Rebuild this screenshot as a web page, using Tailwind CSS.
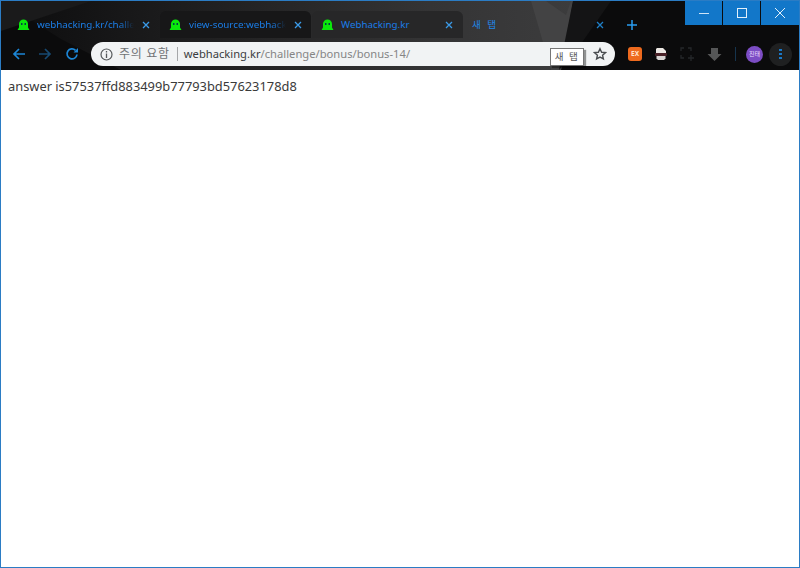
<!DOCTYPE html>
<html lang="en">
<head>
    <meta charset="UTF-8">
    <title>Webhacking.kr</title>
    <script src="https://cdn.jsdelivr.net/npm/@tailwindcss/browser@4"></script>
</head>
<body class="w-[800px] h-[568px] overflow-hidden bg-white font-['Noto_Sans','Noto_Sans_CJK_KR',sans-serif]">
<div class="w-full h-full border border-[#2b7cc4] flex flex-col">

    <!-- browser frame -->
    <div class="relative h-[69px] shrink-0 bg-[#0b0b0c] overflow-hidden">
        <!-- theme picture behind the tabs -->
        <svg class="absolute inset-0" width="798" height="69" viewBox="0 0 798 69">
            <defs>
                <linearGradient id="sheen" x1="0" y1="0" x2="1" y2="0">
                    <stop offset="0" stop-color="#0c0c0d"/>
                    <stop offset="0.3" stop-color="#1c1c1d"/>
                    <stop offset="0.75" stop-color="#343435"/>
                    <stop offset="1" stop-color="#3c3c3d"/>
                </linearGradient>
            </defs>
            <polygon points="0,0 572,0 560,69 120,69 60,38" fill="url(#sheen)"/>
            <polygon points="530,0 545,0 565,14 570,0 572,0 560,69 550,69" fill="#434344"/>
            <polygon points="572,0 610,0 575,50 558,69" fill="#141415"/>
            <polygon points="0,0 90,0 0,30" fill="#1a1a1b"/>
        </svg>

        <!-- window controls -->
        <div class="absolute top-0 right-0 flex gap-px z-10">
            <div class="w-[37px] h-[24px] bg-[#1277c9] flex items-center justify-center">
                <svg width="10" height="10"><path d="M0 5.500H10" stroke="#cfe4f6" fill="none"/></svg>
            </div>
            <div class="w-[37px] h-[24px] bg-[#1277c9] flex items-center justify-center">
                <svg width="10" height="10"><rect x="0.500" y="0.500" width="9" height="9" stroke="#e3f0fa" fill="none"/></svg>
            </div>
            <div class="w-[38px] h-[24px] bg-[#1277c9] flex items-center justify-center">
                <svg width="10" height="10"><path d="M0 0L10 10M10 0L0 10" stroke="#e3f0fa" fill="none"/></svg>
            </div>
        </div>

        <!-- tabs -->
        <div class="relative h-[37px] pt-[10px] pl-[6px] flex items-stretch text-[9.800px] text-[#1b7de6]">
            <div class="w-[152px] flex items-center pl-[10px] pr-[9px]">
                <svg class="shrink-0" width="13" height="13" viewBox="0 0 13 13"><path d="M.5 12L2 9.500V6a4.500 4.500 0 0 1 9 0v3.500L12.500 12z" fill="#0be80b"/><rect x="4" y="5" width="1.500" height="2" fill="#044"/><rect x="7.500" y="5" width="1.500" height="2" fill="#044"/></svg>
                <span class="ml-[7px] pt-px w-[97px] shrink-0 whitespace-nowrap overflow-hidden [mask-image:linear-gradient(90deg,#000_85%,transparent)]">webhacking.kr/challen</span>
                <svg class="shrink-0 ml-auto" width="8" height="8"><path d="M1 1L7 7M7 1L1 7" stroke="#3b9be8" stroke-width="1.300" fill="none"/></svg>
            </div>
            <div class="w-[151px] ml-px flex items-center pl-[9px] pr-[9px] bg-[#171718] rounded-t-[6px]">
                <svg class="shrink-0" width="13" height="13" viewBox="0 0 13 13"><path d="M.5 12L2 9.500V6a4.500 4.500 0 0 1 9 0v3.500L12.500 12z" fill="#0be80b"/><rect x="4" y="5" width="1.500" height="2" fill="#044"/><rect x="7.500" y="5" width="1.500" height="2" fill="#044"/></svg>
                <span class="ml-[7px] pt-px w-[97px] shrink-0 whitespace-nowrap overflow-hidden [mask-image:linear-gradient(90deg,#000_85%,transparent)]">view-source:webhacki</span>
                <svg class="shrink-0 ml-auto" width="8" height="8"><path d="M1 1L7 7M7 1L1 7" stroke="#3b9be8" stroke-width="1.300" fill="none"/></svg>
            </div>
            <div class="w-[151px] ml-[1px] flex items-center pl-[9px] pr-[10px] bg-[#272728] rounded-t-[6px]">
                <svg class="shrink-0" width="13" height="13" viewBox="0 0 13 13"><path d="M.5 12L2 9.500V6a4.500 4.500 0 0 1 9 0v3.500L12.500 12z" fill="#0be80b"/><rect x="4" y="5" width="1.500" height="2" fill="#044"/><rect x="7.500" y="5" width="1.500" height="2" fill="#044"/></svg>
                <span class="ml-[7px] pt-px flex-1 whitespace-nowrap">Webhacking.kr</span>
                <svg class="shrink-0" width="8" height="8"><path d="M1 1L7 7M7 1L1 7" stroke="#3b9be8" stroke-width="1.300" fill="none"/></svg>
            </div>
            <div class="w-[150px] flex items-center pl-[9px] pr-[9px]">
                <span class="flex-1 pt-px tracking-[2px] text-[9.500px] text-[#1f86e8]">새 탭</span>
                <svg class="shrink-0" width="8" height="8"><path d="M1 1L7 7M7 1L1 7" stroke="#1f7fc8" stroke-width="1.300" fill="none"/></svg>
            </div>
            <div class="ml-[14px] flex items-center">
                <svg width="10" height="10"><path d="M5 0V10M0 5H10" stroke="#2a9df0" stroke-width="1.500" fill="none"/></svg>
            </div>
        </div>

        <!-- toolbar -->
        <div class="relative h-[32px] flex items-center">
            <div class="w-[90px] pl-[11px] flex items-center gap-[12px] shrink-0">
                <svg width="14" height="14" viewBox="0 0 14 14"><path d="M13 7H2M7 2L2 7L7 12" stroke="#1c86d6" stroke-width="1.700" fill="none"/></svg>
                <svg width="14" height="14" viewBox="0 0 14 14"><path d="M1 7H12M7 2L12 7L7 12" stroke="#174a72" stroke-width="1.700" fill="none"/></svg>
                <svg class="ml-px" width="14" height="14" viewBox="0 0 14 14"><path d="M12 7.500A5 5 0 1 1 10.500 3.300" stroke="#1c86d6" stroke-width="1.700" fill="none"/><path d="M8.500 5.500H13V1z" fill="#1c86d6"/></svg>
            </div>

            <!-- address bar -->
            <div class="relative w-[524px] h-[24px] rounded-full bg-[#f1f3f4] flex items-center pl-[9px] text-[11.200px] text-[#858585] whitespace-nowrap">
                <svg class="shrink-0" width="13" height="13" viewBox="0 0 13 13"><circle cx="6.500" cy="6.500" r="5.500" stroke="#55585b" stroke-width="1.200" fill="none"/><path d="M6.500 5.500V10M6.500 3V4.500" stroke="#55585b" stroke-width="1.300" fill="none"/></svg>
                <span class="ml-[6px] text-[12px] tracking-[0.700px] text-[#707275]">주의 요함</span>
                <span class="ml-[7px] w-px h-[14px] bg-[#a5a7a9]"></span>
                <span class="ml-[6px]"><span class="text-[#3a3c3e]">webhacking.kr</span>/challenge/bonus/bonus-14/</span>
                <svg class="absolute right-[8px] top-[5px]" width="14" height="14" viewBox="0 0 24 24"><path d="M12 3l2.800 6 6.500.7-4.900 4.300 1.400 6.500L12 17.200l-5.800 3.300 1.400-6.500-4.900-4.300 6.500-.7z" stroke="#4a4d50" stroke-width="2.400" fill="none"/></svg>
            </div>

            <!-- extensions -->
            <div class="ml-[13px] w-[14px] h-[14px] rounded-[3px] bg-[#ee6a1e] flex items-center justify-center text-[6.500px] font-bold text-[#ffe3d0]">EX</div>
            <svg class="ml-[12px]" width="14" height="14" viewBox="0 0 14 14"><path d="M3 1H9L12 4V6H2V2z" fill="#ece8e4"/><rect x="1" y="6" width="12" height="3" rx="1" fill="#4a2228"/><path d="M2.500 9H11.500V11.500L10 13H4L2.500 11.500z" fill="#d8d4d2"/></svg>
            <svg class="ml-[12px]" width="15" height="15" viewBox="0 0 15 15"><path d="M1 4V1H4M8 1H11V4M1 8V11H4" stroke="#26282a" stroke-width="1.300" fill="none"/><path d="M11 8V14M8 11H14" stroke="#26282a" stroke-width="1.300" fill="none"/></svg>
            <svg class="ml-[12px]" width="15" height="15" viewBox="0 0 15 15"><path d="M4 1H11V7H14.500L7.500 14L.5 7H4z" fill="#555657"/></svg>
            <span class="ml-[13px] w-px h-[14px] bg-[#16344d]"></span>
            <div class="ml-[10px] w-[17px] h-[17px] rounded-full bg-[#7c4dc4] flex items-center justify-center text-[6px] text-[#eadfff]">진태</div>
            <div class="ml-[6px] w-[23px] h-[23px] rounded-full bg-[#1f2021] flex flex-col items-center justify-center gap-[2px]">
                <span class="w-[3px] h-[2px] bg-[#1a78c8]"></span>
                <span class="w-[3px] h-[2px] bg-[#1a78c8]"></span>
                <span class="w-[3px] h-[2px] bg-[#1a78c8]"></span>
            </div>
        </div>

        <!-- tooltip -->
        <div class="absolute left-[549px] top-[47px] w-[34px] h-[18px] bg-white border border-[#767676] shadow-[2px_2px_1px_rgba(0,0,0,0.4)] flex items-center justify-center text-[9.500px] tracking-[1.500px] text-[#575757] whitespace-nowrap z-10">새 탭</div>
    </div>

    <!-- page -->
    <div class="flex-1 bg-white pl-[7px] pt-[8px] text-[12.850px] leading-[17px] text-[#3a3a3a]">answer is57537ffd883499b77793bd57623178d8</div>
</div>
</body>
</html>
